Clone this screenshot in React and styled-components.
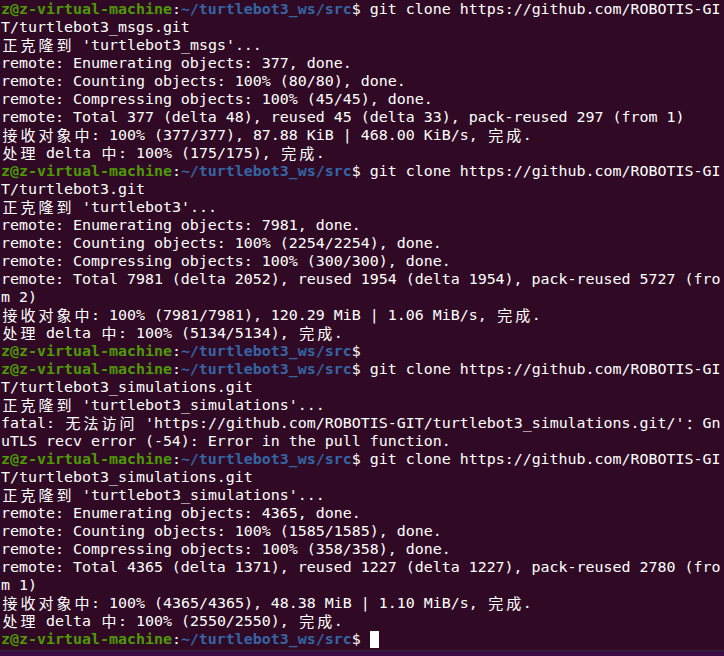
import React from "react";
import styled, { createGlobalStyle } from "styled-components";

const Global = createGlobalStyle`
  html, body { margin: 0; padding: 0; background: #300a24; }
  body { width: 724px; height: 656px; overflow: hidden; }
`;

const Screen = styled.div`
  width: 724px;
  height: 656px;
  display: flex;
  flex-direction: column;
  background: #300a24;
`;

const Terminal = styled.div`
  flex: 1;
  padding: 0 0 0 1px;
  overflow: hidden;
  font-family: "DejaVu Sans Mono", "Noto Sans CJK SC", monospace;
  font-size: 14.95px;
  color: #ffffff;
`;

const Line = styled.div`
  height: 18px;
  line-height: 18px;
  white-space: pre;
`;

const toneColor = { w: "#ffffff", g: "#4e9a06", b: "#3465a4" };

const Seg = styled.span`
  color: ${(p) => toneColor[p.$tone] || "#ffffff"};
  font-weight: ${(p) => (p.$tone === "g" || p.$tone === "b" ? "bold" : "normal")};
`;

const Wide = styled.span`
  display: inline-block;
  width: 18px;
  vertical-align: top;
  text-align: center;
  font-family: "Noto Sans CJK SC", sans-serif;
  font-size: 15px;
  line-height: 18px;
`;

const Cursor = styled.span`
  display: inline-block;
  width: 9px;
  height: 17px;
  margin-top: 1px;
  vertical-align: top;
  background: #ffffff;
`;

const Footer = styled.div`
  height: 5px;
  border-top: 1px solid #2c2c2c;
  background: #3b0b47;
`;

const WIDE_RE = /[\u2E80-\u9FFF\uFF00-\uFF60\u3000-\u303F]/;

function renderText(text) {
  const out = [];
  let buf = "";
  let k = 0;
  for (const ch of text) {
    if (WIDE_RE.test(ch)) {
      if (buf) {
        out.push(buf);
        buf = "";
      }
      out.push(<Wide key={"w" + k++}>{ch}</Wide>);
    } else {
      buf += ch;
    }
  }
  if (buf) out.push(buf);
  return out;
}

const prompt = [
  { t: "g", s: "z@z-virtual-machine" },
  { t: "w", s: ":" },
  { t: "b", s: "~/turtlebot3_ws/src" },
  { t: "w", s: "$ " },
];

const P = (rest) => [...prompt, { t: "w", s: rest }];
const W = (s) => [{ t: "w", s }];

const lines = [
  P("git clone https://github.com/ROBOTIS-GI"),
  W("T/turtlebot3_msgs.git"),
  W("正克隆到 'turtlebot3_msgs'..."),
  W("remote: Enumerating objects: 377, done."),
  W("remote: Counting objects: 100% (80/80), done."),
  W("remote: Compressing objects: 100% (45/45), done."),
  W("remote: Total 377 (delta 48), reused 45 (delta 33), pack-reused 297 (from 1)"),
  W("接收对象中: 100% (377/377), 87.88 KiB | 468.00 KiB/s, 完成."),
  W("处理 delta 中: 100% (175/175), 完成."),
  P("git clone https://github.com/ROBOTIS-GI"),
  W("T/turtlebot3.git"),
  W("正克隆到 'turtlebot3'..."),
  W("remote: Enumerating objects: 7981, done."),
  W("remote: Counting objects: 100% (2254/2254), done."),
  W("remote: Compressing objects: 100% (300/300), done."),
  W("remote: Total 7981 (delta 2052), reused 1954 (delta 1954), pack-reused 5727 (fro"),
  W("m 2)"),
  W("接收对象中: 100% (7981/7981), 120.29 MiB | 1.06 MiB/s, 完成."),
  W("处理 delta 中: 100% (5134/5134), 完成."),
  P(""),
  P("git clone https://github.com/ROBOTIS-GI"),
  W("T/turtlebot3_simulations.git"),
  W("正克隆到 'turtlebot3_simulations'..."),
  W("fatal: 无法访问 'https://github.com/ROBOTIS-GIT/turtlebot3_simulations.git/'：Gn"),
  W("uTLS recv error (-54): Error in the pull function."),
  P("git clone https://github.com/ROBOTIS-GI"),
  W("T/turtlebot3_simulations.git"),
  W("正克隆到 'turtlebot3_simulations'..."),
  W("remote: Enumerating objects: 4365, done."),
  W("remote: Counting objects: 100% (1585/1585), done."),
  W("remote: Compressing objects: 100% (358/358), done."),
  W("remote: Total 4365 (delta 1371), reused 1227 (delta 1227), pack-reused 2780 (fro"),
  W("m 1)"),
  W("接收对象中: 100% (4365/4365), 48.38 MiB | 1.10 MiB/s, 完成."),
  W("处理 delta 中: 100% (2550/2550), 完成."),
  [...prompt, { t: "cursor" }],
];

export default function App() {
  return (
    <Screen>
      <Global />
      <Terminal>
        {lines.map((segs, i) => (
          <Line key={i}>
            {segs.map((seg, j) =>
              seg.t === "cursor" ? (
                <Cursor key={j} />
              ) : (
                <Seg key={j} $tone={seg.t}>
                  {renderText(seg.s)}
                </Seg>
              )
            )}
          </Line>
        ))}
      </Terminal>
      <Footer />
    </Screen>
  );
}
